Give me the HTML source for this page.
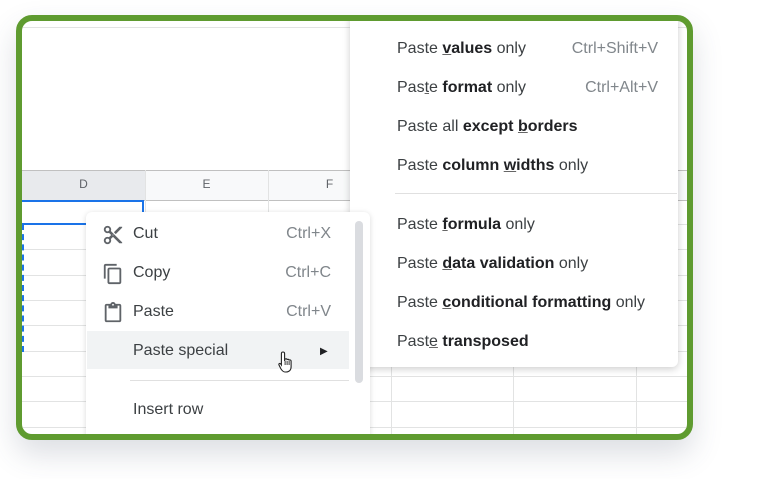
<!DOCTYPE html><html><head><style>
body{margin:0;width:768px;height:479px;background:#fff;position:relative;overflow:hidden;font-family:"Liberation Sans",Arial,sans-serif;}
.frame{position:absolute;left:16px;top:15px;width:665px;height:413px;border:6px solid #5f9b30;border-radius:16px;background:#fff;overflow:hidden;box-shadow:0 14px 30px rgba(60,70,100,.18)}
.a{position:absolute}
.hl{position:absolute;height:1px;background:#e2e3e3;left:0;right:0}
.vl{position:absolute;width:1px;background:#e2e3e3;top:149px;bottom:0}
.menu{position:absolute;background:#fff;box-shadow:0 2px 8px rgba(0,0,0,.2);border-radius:6px}
.it{position:absolute;font-size:16px;color:#3c4043;white-space:nowrap}
.it b{color:#202124}
.sc{position:absolute;font-size:16px;color:#80868b;right:20px}
u{text-decoration-color:#666}
</style></head><body>
<div class="frame">
<div class="hl" style="top:6px"></div>
<div class="a" style="left:0;top:149px;width:665px;height:29px;background:#f8f9fa;border-top:1px solid #c0c0c0;border-bottom:1px solid #c0c0c0"></div>
<div class="a" style="left:0;top:150px;width:123px;height:29px;background:#e8eaed"></div>
<div class="a" style="left:0;top:156px;width:123px;text-align:center;font-size:12px;color:#5f6368">D</div>
<div class="a" style="left:123px;top:156px;width:123px;text-align:center;font-size:12px;color:#5f6368">E</div>
<div class="a" style="left:246px;top:156px;width:123px;text-align:center;font-size:12px;color:#5f6368">F</div>
<div class="vl" style="left:123px"></div><div class="vl" style="left:246px"></div><div class="vl" style="left:369px"></div><div class="vl" style="left:491px"></div><div class="vl" style="left:614px"></div>
<div class="hl" style="top:203px"></div><div class="hl" style="top:228px"></div><div class="hl" style="top:254px"></div><div class="hl" style="top:279px"></div><div class="hl" style="top:304px"></div><div class="hl" style="top:330px"></div><div class="hl" style="top:355px"></div><div class="hl" style="top:380px"></div><div class="hl" style="top:406px"></div>
<div class="a" style="left:0;top:179px;width:120px;height:21px;border:2px solid #1a73e8;border-left:none"></div>
<div class="a" style="left:0;top:203px;height:128px;border-left:2px dashed #1a73e8"></div>

<!-- submenu -->
<div class="menu" style="left:328px;top:-10px;width:328px;height:356px">
<div class="a" style="left:45px;top:182px;width:282px;height:1px;background:#e0e0e0"></div>
<div class="it" style="left:47px;top:29px">Paste <b><u>v</u>alues</b> only</div><div class="sc" style="top:29px">Ctrl+Shift+V</div>
<div class="it" style="left:47px;top:68px">Pas<u>t</u>e <b>format</b> only</div><div class="sc" style="top:68px">Ctrl+Alt+V</div>
<div class="it" style="left:47px;top:107px">Paste all <b>except <u>b</u>orders</b></div>
<div class="it" style="left:47px;top:146px">Paste <b>column <u>w</u>idths</b> only</div>
<div class="it" style="left:47px;top:205px">Paste <b><u>f</u>ormula</b> only</div>
<div class="it" style="left:47px;top:244px">Paste <b><u>d</u>ata validation</b> only</div>
<div class="it" style="left:47px;top:283px">Paste <b><u>c</u>onditional formatting</b> only</div>
<div class="it" style="left:47px;top:322px">Past<u>e</u> <b>transposed</b></div>
</div>

<!-- context menu -->
<div class="menu" style="left:64px;top:191px;width:284px;height:240px;box-shadow:0 1px 6px rgba(0,0,0,.15)">
<div class="a" style="left:269px;top:9px;width:8px;height:162px;background:#dadce0;border-radius:4px"></div>
<div class="a" style="left:1px;top:119px;width:262px;height:38px;background:#f1f3f4"></div>
<div class="a" style="left:44px;top:168px;width:219px;height:1px;background:#e0e0e0"></div>
<svg class="a" style="left:16px;top:12px" width="22" height="22" viewBox="0 0 24 24"><path fill="#5f6368" d="M9.64 7.64c.23-.5.36-1.050.36-1.64 0-2.21-1.79-4-4-4S2 3.79 2 6s1.79 4 4 4c.59 0 1.14-.13 1.64-.36L10 12l-2.36 2.36C7.14 14.13 6.59 14 6 14c-2.21 0-4 1.79-4 4s1.790 4 4 4 4-1.79 4-4c0-.59-.13-1.14-.36-1.64L12 14l7 7h3v-1L9.64 7.64zM6 8c-1.1 0-2-.89-2-2s.9-2 2-2 2 .89 2 2-.9 2-2 2zm0 12c-1.1 0-2-.89-2-2s.9-2 2-2 2 .89 2 2-.9 2-2 2zm6-7.5c-.28 0-.5-.22-.5-.5s.22-.5.5-.5.5.22.5.5-.22.5-.5.5zM19 3l-6 6 2 2 7-7V3z"/></svg>
<svg class="a" style="left:16px;top:51px" width="22" height="22" viewBox="0 0 24 24"><path fill="#5f6368" d="M16 1H4c-1.1 0-2 .9-2 2v14h2V3h12V1zm3 4H8c-1.1 0-2 .9-2 2v14c0 1.1.9 2 2 2h11c1.1 0 2-.9 2-2V7c0-1.1-.9-2-2-2zm0 16H8V7h11v14z"/></svg>
<svg class="a" style="left:16px;top:90px" width="22" height="22" viewBox="0 0 24 24"><path fill="#5f6368" d="M19 2h-4.18C14.4.84 13.3 0 12 0S9.6.84 9.18 2H5c-1.1 0-2 .9-2 2v16c0 1.1.9 2 2 2h14c1.1 0 2-.9 2-2V4c0-1.1-.9-2-2-2zm-7 0c.55 0 1 .45 1 1s-.45 1-1 1-1-.45-1-1 .45-1 1-1zm7 18H5V4h2v3h10V4h2v16z"/></svg>
<div class="it" style="left:47px;top:13px">Cut</div><div class="sc" style="right:39px;top:13px">Ctrl+X</div>
<div class="it" style="left:47px;top:52px">Copy</div><div class="sc" style="right:39px;top:52px">Ctrl+C</div>
<div class="it" style="left:47px;top:91px">Paste</div><div class="sc" style="right:39px;top:91px">Ctrl+V</div>
<div class="it" style="left:47px;top:130px">Paste special</div><div class="a" style="left:234px;top:134px;font-size:10px;color:#202124">&#9654;</div>
<div class="it" style="left:47px;top:189px">Insert row</div>
<svg class="a" style="left:192px;top:138px" width="18" height="24" viewBox="0 0 18 24"><path d="M5 2c1 0 1.6.6 1.6 1.6V11l.5-2c.9-.5 1.8-.2 2 .6.8-.6 1.8-.3 2 .5.9-.5 2-.1 2 1V17c0 3-2 5-5 5H7c-2 0-3-1.5-4-3L1 15c-.5-1 .5-2 1.5-1.3L3.4 15V3.6C3.4 2.6 4 2 5 2z" fill="#fff" stroke="#222" stroke-width="1.1"/><path d="M7.1 11v4M9.1 11v4M11.1 11v4" stroke="#222" stroke-width=".9"/></svg>
</div>
</div>
</body></html>
